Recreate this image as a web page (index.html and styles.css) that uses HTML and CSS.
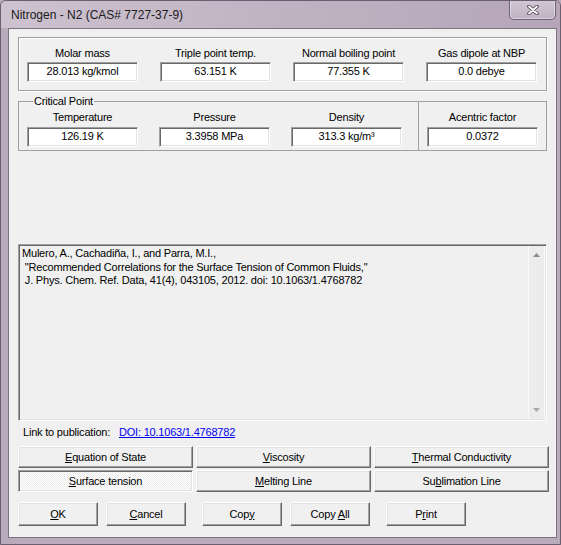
FILE: index.html
```html
<!DOCTYPE html>
<html>
<head>
<meta charset="utf-8">
<link rel="stylesheet" href="styles.css">
</head>
<body>
<div class="window">
  <div class="titlebar">
    <span class="title">Nitrogen - N2 (CAS# 7727-37-9)</span>
    <div class="close">
      <svg width="12" height="10" viewBox="0 0 12 10">
        <path d="M2 1.5 L10 8.5 M10 1.5 L2 8.5" stroke="#4a4150" stroke-width="3.6" stroke-linecap="round"/>
        <path d="M2 1.5 L10 8.5 M10 1.5 L2 8.5" stroke="#ffffff" stroke-width="1.8" stroke-linecap="round"/>
      </svg>
    </div>
  </div>
  <div class="client">
    <div class="panel props">
      <div class="field"><div class="lbl">Molar mass</div><div class="box">28.013 kg/kmol</div></div>
      <div class="field"><div class="lbl">Triple point temp.</div><div class="box">63.151 K</div></div>
      <div class="field"><div class="lbl">Normal boiling point</div><div class="box">77.355 K</div></div>
      <div class="field"><div class="lbl">Gas dipole at NBP</div><div class="box">0.0 debye</div></div>
    </div>
    <div class="crit">
      <fieldset class="group">
        <legend>Critical Point</legend>
        <div class="crit-grid">
          <div class="field gap3"><div class="lbl">Temperature</div><div class="box">126.19 K</div></div>
          <div class="field gap3"><div class="lbl">Pressure</div><div class="box">3.3958 MPa</div></div>
          <div class="field gap3"><div class="lbl">Density</div><div class="box">313.3 kg/m³</div></div>
        </div>
      </fieldset>
      <div class="acentric">
        <div class="field gap3"><div class="lbl">Acentric factor</div><div class="box">0.0372</div></div>
      </div>
    </div>
    <div class="memo">
      <div class="memo-text">Mulero, A., Cachadiña, I., and Parra, M.I.,
 "Recommended Correlations for the Surface Tension of Common Fluids,"
 J. Phys. Chem. Ref. Data, 41(4), 043105, 2012. doi: 10.1063/1.4768782</div>
      <div class="scrollbar">
        <svg width="7" height="4" viewBox="0 0 7 4"><path d="M0 4 L3.5 0 L7 4 Z" fill="#8c8c8c"/></svg>
        <svg width="7" height="4" viewBox="0 0 7 4"><path d="M0 0 L3.5 4 L7 0 Z" fill="#a8a8a8"/></svg>
      </div>
    </div>
    <div class="link-row">Link to publication: <a class="doi">DOI: 10.1063/1.4768782</a></div>
    <div class="tabs">
      <div class="btn"><span><u>E</u>quation of State</span></div>
      <div class="btn"><span><u>V</u>iscosity</span></div>
      <div class="btn"><span><u>T</u>hermal Conductivity</span></div>
      <div class="btn checked"><span><u>S</u>urface tension</span></div>
      <div class="btn"><span><u>M</u>elting Line</span></div>
      <div class="btn"><span>Su<u>b</u>limation Line</span></div>
    </div>
    <div class="actions">
      <div class="btn act"><span><u>O</u>K</span></div>
      <div class="btn act"><span><u>C</u>ancel</span></div>
      <div class="btn act sep"><span>Cop<u>y</u></span></div>
      <div class="btn act"><span>Copy <u>A</u>ll</span></div>
      <div class="btn act sep"><span>P<u>r</u>int</span></div>
    </div>
  </div>
</div>
</body>
</html>
```

FILE: styles.css
```css
html, body {
  margin: 0;
  padding: 0;
  background: #b8a9bb;
}
body {
  font-family: "Liberation Sans", Arial, sans-serif;
  font-size: 11px;
  letter-spacing: -0.2px;
  color: #000;
}
.window {
  width: 561px;
  height: 545px;
  box-sizing: border-box;
  border: 1px solid #6a5f70;
  border-radius: 6px 6px 0 0;
  background: #b9aabc;
  display: flex;
  flex-direction: column;
  overflow: hidden;
}
.titlebar {
  height: 27px;
  flex: none;
  display: flex;
  align-items: flex-start;
  background: linear-gradient(to right, #cdc2cf, #c0b2c3 50%, #b6a5b9);
}
.title {
  padding: 7px 0 0 10px;
  font-size: 12px;
  line-height: 15px;
  letter-spacing: 0;
  color: #1a1a1a;
}
.close {
  margin-left: auto;
  margin-top: -1px;
  margin-right: 4px;
  width: 47px;
  height: 20px;
  box-sizing: border-box;
  border: 1px solid #6e6275;
  border-top: none;
  border-radius: 0 0 5px 5px;
  background: linear-gradient(#d2c8d4, #bfb1c2);
  box-shadow: inset 0 0 0 1px rgba(255,255,255,0.45);
  display: flex;
  align-items: center;
  justify-content: center;
}
.client {
  flex: 1;
  margin: 0 3px 6px 7px;
  background: #f0f0f0;
  border: 1px solid #7d7282;
  padding: 8px 9px 0 9px;
  display: flex;
  flex-direction: column;
  min-height: 0;
}
.panel {
  border: 1px solid #a0a0a0;
  box-shadow: inset 1px 1px 0 #fff, 1px 1px 0 #fff;
}
.props {
  display: grid;
  grid-template-columns: repeat(4, 111px);
  column-gap: 22px;
  padding: 9px 0 8px 8px;
}
.field {
  display: flex;
  flex-direction: column;
  align-items: center;
  gap: 2px;
}
.field.gap3 {
  gap: 3px;
}
.lbl {
  line-height: 13px;
  white-space: nowrap;
}
.box {
  width: 111px;
  height: 20px;
  box-sizing: border-box;
  background: #fff;
  border: 1px solid;
  border-color: #a0a0a0 #fff #fff #a0a0a0;
  box-shadow: inset 1px 1px 0 #696969, inset -1px -1px 0 #e3e3e3;
  text-align: center;
  line-height: 17px;
  white-space: nowrap;
}
.crit {
  display: flex;
  margin-top: 4px;
}
.group {
  margin: 0;
  width: 401px;
  box-sizing: border-box;
  min-width: 0;
  padding: 3px 0 3px 8px;
  border: 1px solid #a0a0a0;
}
.group legend {
  padding: 0 1px;
  margin-left: 6px;
  line-height: 13px;
  font-size: 11px;
}
.crit-grid {
  display: grid;
  grid-template-columns: repeat(3, 111px);
  column-gap: 21px;
}
.acentric {
  flex: 1;
  margin-top: 6px;
  border: 1px solid #a0a0a0;
  border-left: none;
  padding: 9px 0 0 8px;
  display: flex;
}
.memo {
  margin-top: 93px;
  height: 177px;
  box-sizing: border-box;
  display: flex;
  border: 1px solid;
  border-color: #a0a0a0 #fff #fff #a0a0a0;
  box-shadow: inset 1px 1px 0 #696969, inset -1px -1px 0 #e3e3e3;
  padding: 1px;
}
.memo-text {
  flex: 1;
  padding: 1px 2px;
  white-space: pre;
  line-height: 13.5px;
  overflow: hidden;
}
.scrollbar {
  width: 17px;
  flex: none;
  background: #ececec;
  box-shadow: inset 1px 0 0 #fafafa, inset -1px 0 0 #fafafa;
  display: flex;
  flex-direction: column;
  justify-content: space-between;
  align-items: center;
  padding: 7px 0 7px;
  box-sizing: border-box;
}
.link-row {
  margin-top: 5px;
  padding-left: 5px;
  line-height: 13px;
}
.doi {
  margin-left: 6px;
  color: #0000ee;
  text-decoration: underline;
}
.tabs {
  margin-top: 7px;
  display: grid;
  grid-template-columns: repeat(3, 175px);
  grid-auto-rows: 22px;
  gap: 2px 3px;
}
.btn {
  box-sizing: border-box;
  border: 1px solid;
  border-color: #fff #696969 #696969 #fff;
  box-shadow: inset -1px -1px 0 #a0a0a0, inset 1px 1px 0 #e3e3e3;
  background: #f0f0f0;
  display: flex;
  align-items: center;
  justify-content: center;
  line-height: 13px;
  white-space: nowrap;
}
.btn.checked {
  border-color: #a0a0a0 #fff #fff #a0a0a0;
  box-shadow: inset 1px 1px 0 #696969, inset -1px -1px 0 #e3e3e3;
  background: repeating-conic-gradient(#ffffff 0 25%, #ebebeb 0 50%) 0 0 / 2px 2px;
}
.actions {
  margin-top: 10px;
  display: flex;
  gap: 8px;
}
.btn.act {
  width: 80px;
  height: 24px;
}
.btn.sep {
  margin-left: 8px;
}
```
